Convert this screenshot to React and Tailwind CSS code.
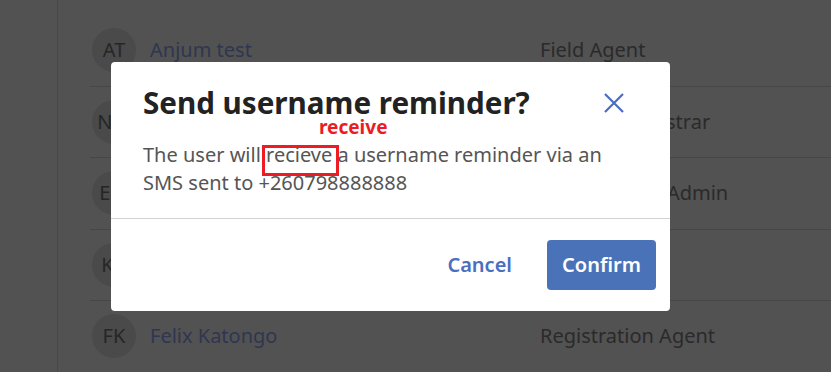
const users = [
  { initials: "AT", name: "Anjum test", role: "Field Agent" },
  { initials: "NM", name: "Nathan Mulenga", role: "National Registrar" },
  { initials: "EM", name: "Emmanuel Mayuka", role: "Local System Admin" },
  { initials: "KB", name: "Kalusha Bwalya", role: "Field Agent" },
  { initials: "FK", name: "Felix Katongo", role: "Registration Agent" },
];

function UserRow({ user }) {
  return (
    <div className="h-[71.5px] flex items-center border-b border-[#474747]">
      <div className="w-[44px] h-[44px] ml-[2px] rounded-full bg-[#4a4a4a] flex items-center justify-center text-[20px] text-[#262626]">
        {user.initials}
      </div>
      <div className="ml-[14px] w-[390px] text-[20px] text-[#2f364f]">{user.name}</div>
      <div className="text-[20px] text-[#2a2a2a]">{user.role}</div>
    </div>
  );
}

export default function App() {
  return (
    <div
      className="relative h-[372px] w-full overflow-hidden bg-[#525252]"
      style={{ fontFamily: '"Noto Sans", sans-serif' }}
    >
      {/* page behind the dialog */}
      <div className="flex h-full">
        <div className="w-[58px] border-r border-[#474747]"></div>
        <div className="flex-1 pl-[32px] pt-[15px]">
          {users.map((u) => (
            <UserRow key={u.initials} user={u} />
          ))}
        </div>
      </div>

      {/* dialog */}
      <div className="absolute inset-0 flex items-center justify-center pr-[50px]">
        <div className="relative w-[559px] h-[249px] bg-white rounded-[4px] flex flex-col">
          <div className="pl-[32px] pr-[46px] pt-[21px] pb-[21px]">
            <div className="flex items-center justify-between h-[40px]">
              <h2 className="text-[29.6px] font-bold text-[#222222] leading-[40px]">
                Send username reminder?
              </h2>
              <button className="text-[#4a6cc2]">
                <svg width="20" height="20" viewBox="0 0 20 20" className="block">
                  <path d="M1 1 L19 19 M19 1 L1 19" stroke="currentColor" strokeWidth="2.2" />
                </svg>
              </button>
            </div>
            <p className="mt-[18px] text-[20px] leading-[28px] text-[#555555]">
              The user will recieve a username reminder via an SMS sent to +260798888888
            </p>
          </div>
          <div className="border-t border-[#d3d3d3]"></div>
          <div className="flex-1 flex items-start justify-end pr-[14px] pt-[21px]">
            <button className="h-[50px] px-[16px] text-[20px] font-semibold text-[#4a6fbf]">
              Cancel
            </button>
            <button className="ml-[19px] h-[50px] w-[109px] rounded-[4px] bg-[#4a72b9] text-[20px] font-semibold text-white">
              Confirm
            </button>
          </div>

          {/* review annotation */}
          <div className="absolute left-[151px] top-[83px] w-[77px] h-[31px] border-[3.5px] border-[#ed1c24]"></div>
          <div className="absolute left-[208px] top-[53px] text-[19px] font-bold text-[#ed1c24] leading-[24px]">
            receive
          </div>
        </div>
      </div>
    </div>
  );
}
